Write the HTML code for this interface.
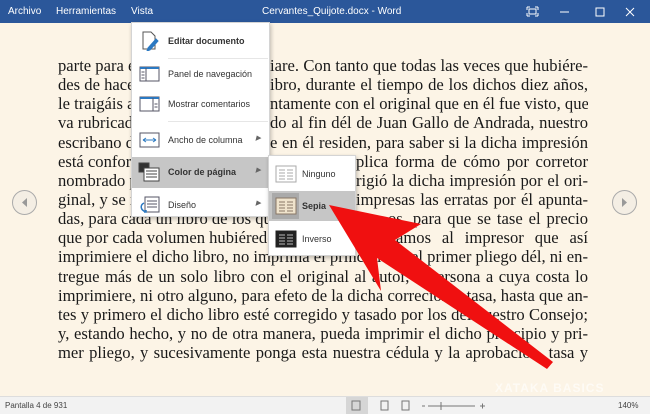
<!DOCTYPE html>
<html><head><meta charset="utf-8"><style>
*{margin:0;padding:0;box-sizing:border-box}
body{width:650px;height:414px;overflow:hidden;background:#fcf4e6;position:relative;font-family:"Liberation Sans",sans-serif}
#tb{position:absolute;left:0;top:0;width:650px;height:23px;background:#2b579a;color:#fff;font-size:10px}
#tb span{position:absolute;top:6px}
#txt{position:absolute;left:58px;top:56px;width:530px;font-family:"Liberation Serif",serif;font-size:16.6px;line-height:19.15px;color:#1a1a1a}
#txt>div{text-align:justify;text-align-last:justify;white-space:nowrap;overflow:hidden;position:relative;height:19.15px}
#txt .l{position:absolute;left:0;top:0;text-align:left;text-align-last:left}
#txt .r{position:absolute;right:0;top:0;text-align:justify;text-align-last:justify}
#menu{position:absolute;left:131px;top:22px;width:139px;height:195px;background:#fff;border:1px solid #d4d4d4;box-shadow:1px 2px 4px rgba(0,0,0,.25);font-size:9px;color:#333}
.it{position:absolute;left:0;width:137px;height:30px}
.it span{position:absolute;left:36px;top:10px}
.ic{position:absolute;left:6px;top:5px;width:22px;height:20px}
.sep{position:absolute;left:36px;width:100px;height:1px;background:#e6e6e6}
.ar{position:absolute;right:8px;top:9px;font-size:7px;color:#666}
#sub{position:absolute;left:268px;top:155px;width:88px;height:101px;background:#fff;border:1px solid #d4d4d4;box-shadow:1px 2px 4px rgba(0,0,0,.25);font-size:9px;color:#333}
.circ{position:absolute;width:25px;height:25px;border:1px solid #aaa;border-radius:50%;background:#f4eee4}
#sb{position:absolute;left:0;top:396px;width:650px;height:18px;background:#f2f2f2;border-top:1px solid #ddd;font-size:8px;color:#444}
</style></head><body>
<div id="tb"><span style="left:8px">Archivo</span><span style="left:56px">Herramientas</span><span style="left:131px">Vista</span><span style="left:262px">Cervantes_Quijote.docx - Word</span>
<svg style="position:absolute;left:520px;top:5px" width="120" height="14" stroke="#fff" fill="none" stroke-width="1"><rect x="9" y="4" width="7" height="5"/><path d="M7 2h3M7 2v3M18 2h-3M18 2v3M7 11h3M7 11v-3M18 11h-3M18 11v-3"/><path d="M40 7h9"/><rect x="76" y="3" width="8" height="8"/><path d="M106 3l8 8M114 3l-8 8"/></svg></div>
<div id="txt">
<div><span class="l">parte para ello</span><div class="r" style="width:318px">iare. Con tanto que todas las veces que hubiére-</div></div>
<div><span class="l">des de hacer im</span><div class="r" style="width:318px">ibro, durante el tiempo de los dichos diez años,</div></div>
<div><span class="l">le traigáis al C</span><div class="r" style="width:318px">ntamente con el original que en él fue visto, que</div></div>
<div><span class="l">va rubricada y</span><div class="r" style="width:318px">do al fin dél de Juan Gallo de Andrada, nuestro</div></div>
<div><span class="l">escribano de Cá</span><div class="r" style="width:318px">e en él residen, para saber si la dicha impresión</div></div>
<div><span class="l">está conforme</span><div class="r" style="width:232px">plica forma de cómo por corretor</div></div>
<div><span class="l">nombrado por nu</span><div class="r" style="width:232px">rigió la dicha impresión por el ori-</div></div>
<div><span class="l">ginal, y se im</span><div class="r" style="width:232px">impresas las erratas por él apunta-</div></div>
<div><span class="l">das, para cada un libro de los que fu</span><div class="r" style="width:200px">os, para que se tase el precio</div></div>
<div><span class="l">que por cada volumen hubiéredes</span><div class="r" style="width:192px">amos al impresor que así</div></div>
<div>imprimiere el dicho libro, no imprima el principio ni el primer pliego dél, ni en-</div>
<div>tregue más de un solo libro con el original al autor, o persona a cuya costa lo</div>
<div>imprimiere, ni otro alguno, para efeto de la dicha correción y tasa, hasta que an-</div>
<div>tes y primero el dicho libro esté corregido y tasado por los del nuestro Consejo;</div>
<div>y, estando hecho, y no de otra manera, pueda imprimir el dicho principio y pri-</div>
<div>mer pliego, y sucesivamente ponga esta nuestra cédula y la aprobación, tasa y</div>
</div>
<div class="circ" style="left:12px;top:190px"><svg width="23" height="23"><path d="M14 7l-5 4.5 5 4.5z" fill="#999"/></svg></div>
<div class="circ" style="left:612px;top:190px"><svg width="23" height="23"><path d="M9 7l5 4.5-5 4.5z" fill="#999"/></svg></div>
<div id="menu">
<div class="it" style="top:3px"><svg class="ic" viewBox="0 0 22 20" fill="none" stroke="#555"><path d="M5 1h8l4 4v13H5z"/><path d="M10 17l8-9 2 2-8 9-3 1z" fill="#2b79c2" stroke="#2b79c2"/></svg><span style="font-weight:bold">Editar documento</span></div>
<div class="sep" style="top:35px"></div>
<div class="it" style="top:36px"><svg class="ic" viewBox="0 0 22 20" fill="none" stroke="#556"><rect x="2" y="3" width="19" height="14"/><path d="M2 4h19" stroke="#2b79c2" stroke-width="2"/><path d="M8 4v13M3.5 8h3M3.5 11h3M3.5 14h3"/></svg><span>Panel de navegación</span></div>
<div class="it" style="top:66px"><svg class="ic" viewBox="0 0 22 20" fill="none" stroke="#556"><rect x="2" y="3" width="19" height="14"/><path d="M2 4h19" stroke="#2b79c2" stroke-width="2"/><path d="M15 4v13M16.5 10h3M16.5 13h3"/></svg><span>Mostrar comentarios</span></div>
<div class="sep" style="top:98px"></div>
<div class="it" style="top:102px"><svg class="ic" viewBox="0 0 22 20" fill="none" stroke="#556"><rect x="2" y="3" width="19" height="14"/><path d="M5 10h13M5 10l3-2M5 10l3 2M18 10l-3-2M18 10l-3 2" stroke="#2b79c2"/></svg><span>Ancho de columna</span><i class="ar">▶</i></div>
<div class="it" style="top:134px;background:#c6c6c6;height:31px"><svg class="ic" viewBox="0 0 22 20" fill="none" stroke="#444"><rect x="1" y="1" width="10" height="9" fill="#333"/><rect x="6" y="6" width="15" height="13" fill="#fff"/><path d="M8 9h11M8 12h11M8 15h11"/></svg><span style="font-weight:bold">Color de página</span><i class="ar">▶</i></div>
<div class="it" style="top:167px"><svg class="ic" viewBox="0 0 22 20" fill="none" stroke="#556"><rect x="7" y="2" width="14" height="15" fill="#fff"/><path d="M9 6h10M9 9h10M9 12h10"/><path d="M6 8c-4 2-4 7 2 9M6 17l2 0 0-2" stroke="#2b79c2" stroke-width="1.5"/></svg><span>Diseño</span><i class="ar">▶</i></div>
</div>
<div id="sub">
<div class="it" style="top:3px;width:86px"><svg class="ic" viewBox="0 0 22 20" fill="none" stroke="#aaa"><rect x="1" y="2" width="20" height="16"/><path d="M4 6h6M4 9h6M4 12h6M4 15h6M12 6h6M12 9h6M12 12h6M12 15h6"/></svg><span style="left:33px">Ninguno</span></div>
<div class="it" style="top:35px;width:86px;background:#c6c6c6"><div style="position:absolute;left:3px;top:2px;width:27px;height:26px;background:#aaa"></div><svg class="ic" viewBox="0 0 22 20" fill="#efe3cc" stroke="#876"><rect x="1" y="2" width="20" height="16"/><path d="M4 6h6M4 9h6M4 12h6M4 15h6M12 6h6M12 9h6M12 12h6M12 15h6"/></svg><span style="left:33px;font-weight:bold">Sepia</span></div>
<div class="it" style="top:68px;width:86px"><svg class="ic" viewBox="0 0 22 20" fill="#222" stroke="#bbb"><rect x="1" y="2" width="20" height="16" stroke="#222"/><path d="M4 6h6M4 9h6M4 12h6M4 15h6M12 6h6M12 9h6M12 12h6M12 15h6"/></svg><span style="left:33px">Inverso</span></div>
</div>
<svg style="position:absolute;left:0;top:0" width="650" height="414"><polygon points="329,205 421,224 395,240 553,362 547,369 377,258 381,291" fill="#f01010"/></svg>
<div style="position:absolute;left:495px;top:381px;font-size:12px;color:rgba(255,255,255,.6);font-weight:bold;letter-spacing:1px">XATAKA BASICS</div>
<div id="sb"><span style="position:absolute;left:5px;top:4px">Pantalla 4 de 931</span>
<div style="position:absolute;left:346px;top:0;width:22px;height:17px;background:#d6d6d6"></div>
<svg style="position:absolute;left:350px;top:3px" width="290" height="12" stroke="#777" fill="none"><rect x="2" y="1" width="8" height="9"/><rect x="31" y="1" width="7" height="9"/><rect x="52" y="1" width="7" height="9"/><path d="M72 6h3M78 6h47M91 2v8M130 6h5M132.5 3.5v5" stroke-width="1"/></svg>
<span style="position:absolute;left:618px;top:4px">140%</span></div>
</body></html>
